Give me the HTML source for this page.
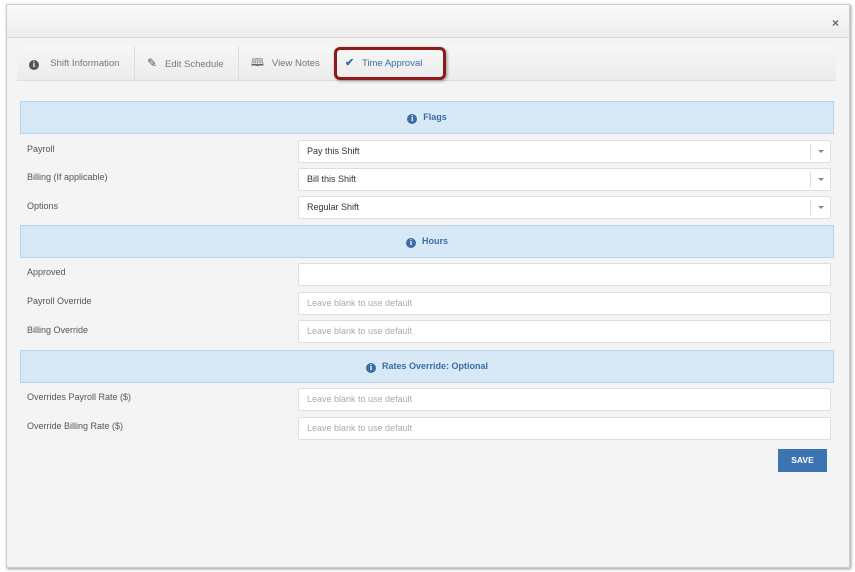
<!DOCTYPE html>
<html><head><style>
*{box-sizing:border-box;margin:0;padding:0}
body{width:855px;height:572px;background:#fff;font-family:"Liberation Sans",sans-serif;position:relative;overflow:hidden;font-size:9px;color:#555}
.modal{position:absolute;left:6px;top:4px;width:844px;height:564px;background:#f4f4f4;border:1px solid #ccc;box-shadow:1px 1px 3px rgba(0,0,0,.4)}
.hdr{position:absolute;left:0;top:0;right:0;height:33px;background:linear-gradient(#fafafa,#ececec);border-bottom:1px solid #d6d6d6}
.x{position:absolute;right:10px;top:11px;font-size:12px;font-weight:bold;color:#666}
.tabs{position:absolute;left:10px;top:41px;width:819px;height:35px;background:linear-gradient(#f7f7f7,#ebebeb);border-bottom:1px solid #ddd}
.tab{position:absolute;top:0;height:35px;line-height:35px;color:#777;font-size:9.5px}
.sep{position:absolute;top:0;width:1px;height:35px;background:#ddd}
.sec{position:absolute;left:13px;width:814px;height:33px;background:#d7e8f7;border:1px solid #b9d3ec;text-align:center;line-height:31px;color:#3a6ea5;font-weight:bold;font-size:9px}
.i{display:inline-block;width:10px;height:10px;border-radius:50%;background:#3a6ea5;color:#fff;font-size:8px;line-height:10px;text-align:center;margin-right:6px;vertical-align:-1px;font-family:"Liberation Serif",serif;font-weight:bold}
.lbl{position:absolute;left:20px;font-size:9px;color:#555}
.in{position:absolute;left:291px;width:533px;height:23px;background:#fff;border:1px solid #ddd;border-radius:2px;line-height:21px;padding-left:8px;font-size:9px;color:#333}
.ph{color:#aaa}
.dd{position:absolute;right:0;top:3px;width:20px;height:15px;border-left:1px solid #ddd}
.dd:after{content:"";position:absolute;left:7px;top:6px;border:3px solid transparent;border-top-color:#888}
.save{position:absolute;left:771px;top:444px;width:49px;height:23px;background:#3c74b1;color:#fff;font-weight:bold;font-size:8.5px;text-align:center;line-height:23px}
</style></head><body>
<div class="modal">
<div class="hdr"><div class="x">×</div></div>
<div class="tabs">
 <div class="tab" style="left:12px"><span class="i" style="background:#555">i</span>&nbsp; Shift Information</div>
 <div class="sep" style="left:117px"></div>
 <div class="tab" style="left:130px"><span style="font-size:12px;color:#555">✎</span>&nbsp;&nbsp; Edit Schedule</div>
 <div class="sep" style="left:221px"></div>
 <div class="tab" style="left:234px"><span style="font-size:11px;color:#666">🕮</span>&nbsp;&nbsp; View Notes</div>
 <div class="tab" style="left:328px;color:#3a6ea5"><b style="font-size:11px">✔</b>&nbsp;&nbsp; Time Approval</div>
</div>
<div style="position:absolute;left:327px;top:42px;width:112px;height:33px;border:3px solid #8b1a1a;border-radius:6px;box-shadow:1px 1px 3px rgba(0,0,0,.4)"></div>
<div class="sec" style="top:96px"><span class="i">i</span>Flags</div>
<div class="lbl" style="top:139px">Payroll</div>
<div class="in" style="top:135px">Pay this Shift<div class="dd"></div></div>
<div class="lbl" style="top:167px">Billing (If applicable)</div>
<div class="in" style="top:163px">Bill this Shift<div class="dd"></div></div>
<div class="lbl" style="top:196px">Options</div>
<div class="in" style="top:191px">Regular Shift<div class="dd"></div></div>
<div class="sec" style="top:220px"><span class="i">i</span>Hours</div>
<div class="lbl" style="top:262px">Approved</div>
<div class="in" style="top:258px"></div>
<div class="lbl" style="top:291px">Payroll Override</div>
<div class="in ph" style="top:287px">Leave blank to use default</div>
<div class="lbl" style="top:320px">Billing Override</div>
<div class="in ph" style="top:315px">Leave blank to use default</div>
<div class="sec" style="top:345px"><span class="i">i</span>Rates Override: Optional</div>
<div class="lbl" style="top:387px">Overrides Payroll Rate ($)</div>
<div class="in ph" style="top:383px">Leave blank to use default</div>
<div class="lbl" style="top:416px">Override Billing Rate ($)</div>
<div class="in ph" style="top:412px">Leave blank to use default</div>
<div class="save">SAVE</div>
</div>
</body></html>
